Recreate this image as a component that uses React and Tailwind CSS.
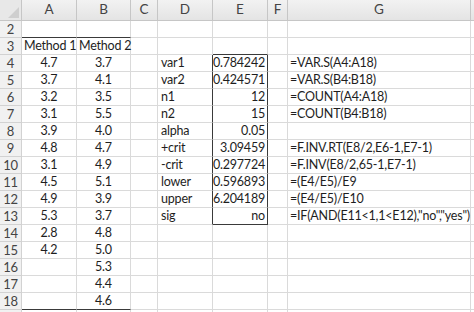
import React from "react";

const cols = ["A", "B", "C", "D", "E", "F", "G", ""];

const A = ["4.7", "3.7", "3.2", "3.1", "3.9", "4.8", "3.1", "4.5", "4.9", "5.3", "2.8", "4.2", "", "", ""];
const B = ["3.7", "4.1", "3.5", "5.5", "4.0", "4.7", "4.9", "5.1", "3.9", "3.7", "4.8", "5.0", "5.3", "4.4", "4.6"];
const D = ["var1", "var2", "n1", "n2", "alpha", "+crit", "-crit", "lower", "upper", "sig"];
const E = ["0.784242", "0.424571", "12", "15", "0.05", "3.09459", "0.297724", "0.596893", "6.204189", "no"];
const G = [
  "=VAR.S(A4:A18)",
  "=VAR.S(B4:B18)",
  "=COUNT(A4:A18)",
  "=COUNT(B4:B18)",
  "",
  "=F.INV.RT(E8/2,E6-1,E7-1)",
  "=F.INV(E8/2,65-1,E7-1)",
  "=(E4/E5)/E9",
  "=(E4/E5)/E10",
  '=IF(AND(E11<1,1<E12),"no","yes")',
];

const grid = "border-r border-b border-[#dadada]";

const Cell = ({ children, className = "" }) => (
  <div className={`h-[17px] flex items-center whitespace-nowrap px-[2px] ${className}`}>
    {children}
  </div>
);

const App = () => {
  const rows = [];
  for (let r = 2; r <= 19; r++) {
    const i = r - 4;
    const inData = r >= 4 && r <= 18;
    const inBox = r >= 4 && r <= 13;
    rows.push(
      <React.Fragment key={r}>
        <div className="h-[17px] flex items-center justify-center bg-[#f1f1f1] border-r border-b border-[#d2d2d2] text-[#444] text-[13px]">
          {r < 19 ? r : ""}
        </div>
        <Cell className={`${r === 3 ? "justify-start" : "justify-center"} ${grid} ${r === 2 || r === 18 ? "!border-b-[#3a3a3a]" : ""}`}>
          {r === 3 ? "Method 1" : inData ? A[i] : ""}
        </Cell>
        <Cell className={`${r === 3 ? "justify-start" : "justify-center"} ${grid} ${r === 2 || r === 18 ? "!border-b-[#3a3a3a]" : ""}`}>
          {r === 3 ? "Method 2" : inData ? B[i] : ""}
        </Cell>
        <Cell className={grid} />
        <Cell className={`pl-[3px] ${grid} ${inBox ? "!border-r-[#3a3a3a]" : ""}`}>{inBox ? D[i] : ""}</Cell>
        <Cell
          className={`justify-end ${grid} ${inBox ? "!border-r-[#3a3a3a]" : ""} ${
            r === 3 || r === 13 ? "!border-b-[#3a3a3a]" : ""
          }`}
        >
          {inBox ? E[i] : ""}
        </Cell>
        <Cell className={grid} />
        <Cell className={grid}>{inBox ? G[i] : ""}</Cell>
        <Cell className="border-b border-[#dadada]" />
      </React.Fragment>
    );
  }

  return (
    <div
      className="w-[474px] h-[312px] overflow-hidden bg-white text-[#1e1e1e] text-[12.5px] leading-none tracking-[-0.2px]"
      style={{ fontFamily: "Lato, 'Liberation Sans', sans-serif" }}
    >
      <div className="grid grid-cols-[22px_55px_54px_27px_55px_55px_20px_183px_1fr]">
        {/* corner */}
        <div className="h-[21px] relative bg-[#e8e8e8] border-r border-b border-[#c6c6c6]">
          <svg className="absolute right-[2px] bottom-[2px]" width="11" height="11" viewBox="0 0 11 11">
            <polygon points="11,0 11,11 0,11" fill="#cfcfcf" />
          </svg>
        </div>
        {/* column headers */}
        {cols.map((c, k) => (
          <div
            key={k}
            className="h-[21px] flex items-center justify-center bg-gradient-to-b from-[#f2f2f2] to-[#e4e4e4] border-r border-b border-[#c6c6c6] text-[#444] text-[13.5px] tracking-normal"
          >
            {c}
          </div>
        ))}
        {rows}
      </div>
    </div>
  );
};

export default App;
